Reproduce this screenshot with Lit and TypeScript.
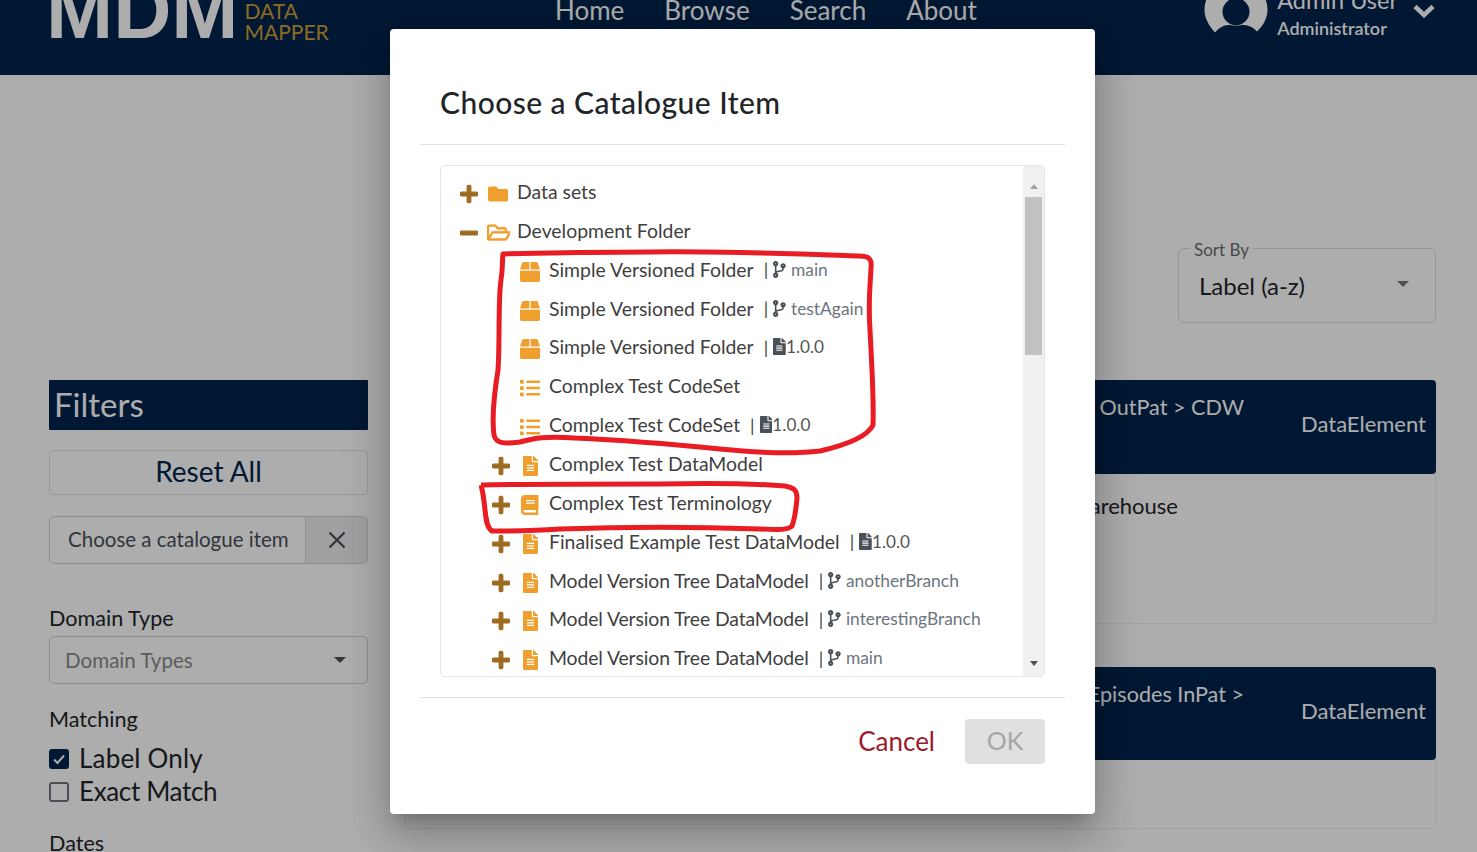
import { LitElement, html, css, svg } from 'lit';
import { customElement } from 'lit/decorators.js';

const icons: Record<string, [number, string]> = {
  plus: [448, 'M416 208H272V64c0-17.67-14.33-32-32-32h-32c-17.67 0-32 14.33-32 32v144H32c-17.67 0-32 14.33-32 32v32c0 17.67 14.33 32 32 32h144v144c0 17.67 14.33 32 32 32h32c17.67 0 32-14.33 32-32V304h144c17.67 0 32-14.33 32-32v-32c0-17.67-14.33-32-32-32z'],
  minus: [448, 'M416 208H32c-17.67 0-32 14.33-32 32v32c0 17.67 14.33 32 32 32h384c17.67 0 32-14.33 32-32v-32c0-17.67-14.33-32-32-32z'],
  folder: [512, 'M464 128H272l-64-64H48C21.49 64 0 85.49 0 112v288c0 26.51 21.49 48 48 48h416c26.51 0 48-21.49 48-48V176c0-26.51-21.49-48-48-48z'],
  open: [576, 'M527.9 224H480v-48c0-26.5-21.5-48-48-48H272l-64-64H48C21.5 64 0 85.5 0 112v288c0 26.5 21.5 48 48 48h400c16.5 0 31.9-8.5 40.7-22.6l79.9-128c20-31.9-3-73.4-40.7-73.4zM48 118c0-3.3 2.7-6 6-6h134.1l64 64H426c3.3 0 6 2.7 6 6v42H152c-16.8 0-32.4 8.8-41.1 23.2L48 351.4zm400 282H72l77.2-128H528z'],
  box: [512, 'M509.5 184.6L458.9 32.8C452.4 13.2 434.1 0 413.4 0H272v192h238.7c-.4-2.5-.4-5-1.2-7.4zM240 0H98.6c-20.7 0-39 13.2-45.5 32.8L2.5 184.6c-.8 2.4-.8 4.9-1.2 7.4H240V0zM0 224v240c0 26.5 21.5 48 48 48h416c26.5 0 48-21.5 48-48V224H0z'],
  list: [512, 'M80 368H16a16 16 0 0 0-16 16v64a16 16 0 0 0 16 16h64a16 16 0 0 0 16-16v-64a16 16 0 0 0-16-16zm0-320H16A16 16 0 0 0 0 64v64a16 16 0 0 0 16 16h64a16 16 0 0 0 16-16V64a16 16 0 0 0-16-16zm0 160H16a16 16 0 0 0-16 16v64a16 16 0 0 0 16 16h64a16 16 0 0 0 16-16v-64a16 16 0 0 0-16-16zm416 176H176a16 16 0 0 0-16 16v32a16 16 0 0 0 16 16h320a16 16 0 0 0 16-16v-32a16 16 0 0 0-16-16zm0-320H176a16 16 0 0 0-16 16v32a16 16 0 0 0 16 16h320a16 16 0 0 0 16-16V80a16 16 0 0 0-16-16zm0 160H176a16 16 0 0 0-16 16v32a16 16 0 0 0 16 16h320a16 16 0 0 0 16-16v-32a16 16 0 0 0-16-16z'],
  file: [384, 'M224 136V0H24C10.7 0 0 10.7 0 24v464c0 13.3 10.7 24 24 24h336c13.3 0 24-10.7 24-24V160H248c-13.2 0-24-10.8-24-24zm64 236c0 6.6-5.4 12-12 12H108c-6.6 0-12-5.4-12-12v-8c0-6.6 5.4-12 12-12h168c6.6 0 12 5.4 12 12v8zm0-64c0 6.6-5.4 12-12 12H108c-6.6 0-12-5.4-12-12v-8c0-6.6 5.4-12 12-12h168c6.6 0 12 5.4 12 12v8zm0-72v8c0 6.6-5.4 12-12 12H108c-6.6 0-12-5.4-12-12v-8c0-6.6 5.4-12 12-12h168c6.6 0 12 5.4 12 12zm96-114.1v6.1H256V0h6.1c6.4 0 12.5 2.5 17 7l97.9 98c4.5 4.5 7 10.6 7 16.9z'],
  book: [448, 'M448 360V24c0-13.3-10.7-24-24-24H96C43 0 0 43 0 96v320c0 53 43 96 96 96h328c13.3 0 24-10.7 24-24v-16c0-7.5-3.5-14.3-8.9-18.7-4.2-15.4-4.2-59.3 0-74.7 5.4-4.3 8.9-11.1 8.9-18.6zM128 134c0-3.3 2.7-6 6-6h212c3.3 0 6 2.7 6 6v20c0 3.3-2.7 6-6 6H134c-3.3 0-6-2.7-6-6v-20zm0 64c0-3.3 2.7-6 6-6h212c3.3 0 6 2.7 6 6v20c0 3.3-2.7 6-6 6H134c-3.3 0-6-2.7-6-6v-20zm253.4 250H96c-17.7 0-32-14.3-32-32 0-17.6 14.4-32 32-32h285.4c-1.9 17.1-1.9 46.9 0 64z'],
  branch: [384, 'M384 144c0-44.2-35.8-80-80-80s-80 35.8-80 80c0 36.4 24.3 67.1 57.5 76.8-.6 16.1-4.2 28.5-11 36.9-15.4 19.2-49.3 22.4-85.2 25.7-28.2 2.6-57.4 5.4-81.3 16.9v-144c32.5-10.2 56-40.5 56-76.3 0-44.2-35.8-80-80-80S0 35.8 0 80c0 35.8 23.5 66.1 56 76.3v199.3C23.5 365.9 0 396.2 0 432c0 44.2 35.8 80 80 80s80-35.8 80-80c0-34-21.2-63.1-51.2-74.6 3.1-5.2 7.8-9.8 14.9-13.4 16.2-8.2 40.4-10.4 66.1-12.8 42.2-3.9 90-8.4 118.2-43.4 14-17.4 21.1-39.8 21.6-67.9 31.6-10.8 54.4-40.7 54.4-75.9zM80 64c8.8 0 16 7.2 16 16s-7.2 16-16 16-16-7.2-16-16 7.2-16 16-16zm0 384c-8.8 0-16-7.2-16-16s7.2-16 16-16 16 7.2 16 16-7.2 16-16 16zm224-320c8.8 0 16 7.2 16 16s-7.2 16-16 16-16-7.2-16-16 7.2-16 16-16z'],
};

const icon = (name: string, cls: string) => {
  const [w, d] = icons[name];
  return html`<svg class=${cls} viewBox="0 0 ${w} 512"><path d=${d}></path></svg>`;
};

interface Row { level: number; toggle?: string; icon: string; label: string; branch?: string; version?: string; }

const rows: Row[] = [
  { level: 0, toggle: 'plus', icon: 'folder', label: 'Data sets' },
  { level: 0, toggle: 'minus', icon: 'open', label: 'Development Folder' },
  { level: 1, icon: 'box', label: 'Simple Versioned Folder', branch: 'main' },
  { level: 1, icon: 'box', label: 'Simple Versioned Folder', branch: 'testAgain' },
  { level: 1, icon: 'box', label: 'Simple Versioned Folder', version: '1.0.0' },
  { level: 1, icon: 'list', label: 'Complex Test CodeSet' },
  { level: 1, icon: 'list', label: 'Complex Test CodeSet', version: '1.0.0' },
  { level: 1, toggle: 'plus', icon: 'file', label: 'Complex Test DataModel' },
  { level: 1, toggle: 'plus', icon: 'book', label: 'Complex Test Terminology' },
  { level: 1, toggle: 'plus', icon: 'file', label: 'Finalised Example Test DataModel', version: '1.0.0' },
  { level: 1, toggle: 'plus', icon: 'file', label: 'Model Version Tree DataModel', branch: 'anotherBranch' },
  { level: 1, toggle: 'plus', icon: 'file', label: 'Model Version Tree DataModel', branch: 'interestingBranch' },
  { level: 1, toggle: 'plus', icon: 'file', label: 'Model Version Tree DataModel', branch: 'main' },
];

@customElement('app-root')
export class AppRoot extends LitElement {
  static styles = css`
    :host {
      display: block;
      position: relative;
      height: 852px;
      overflow: hidden;
      background: #fff;
      font-family: 'Lato', 'Open Sans', sans-serif;
      color: #212529;
    }
    * { box-sizing: border-box; }

    header {
      height: 75px;
      background: #01244c;
      color: #fff;
      display: flex;
      align-items: flex-end;
      overflow: hidden;
      padding: 0 42px 36px 46px;
    }
    .logo { display: flex; align-items: flex-end; width: 509px; }
    .mdm {
      font: bold 80.6px/60px 'Liberation Sans', sans-serif;
      height: 60px;
      margin-bottom: -1px;
    }
    .sub {
      color: #cc9f35;
      font-size: 21px;
      line-height: 21px;
      margin: 0 0 -3px 6px;
      width: 90px;
    }
    nav { display: flex; gap: 40px; font-size: 26px; line-height: 30px; margin-bottom: 14px; }
    .user { margin-left: auto; display: flex; align-items: flex-end; }
    .avatar { width: 64px; height: 40px; fill: #fff; display: block; margin: 0 9px 1px 0; }
    .who { font-size: 18px; font-weight: 600; line-height: 24px; margin-bottom: -1px; }
    .who .name-top { font-size: 23.500px; font-weight: 400; line-height: 27px; margin-bottom: 2px; }
    .chev { width: 22px; height: 14px; margin: 0 0 21px 15px; fill: none; stroke: #fff; stroke-width: 4.500; }

    main {
      display: grid;
      grid-template-columns: 319px 1fr;
      column-gap: 37px;
      padding: 0 41px 0 49px;
    }
    .sort-row { grid-column: 1 / 3; display: flex; justify-content: flex-end; padding-top: 164px; height: 305px; }
    fieldset {
      width: 258px;
      height: 84px;
      margin: 0;
      border: 1px solid #dcdcdc;
      border-radius: 6px;
      padding: 0 20px;
      display: flex;
      justify-content: space-between;
    }
    legend { font-size: 17px; height: 18px; line-height: 22px; color: #6c6c6c; padding: 0 4px 0 4px; margin-left: -9px; }
    .sort-val { font-size: 24px; line-height: 30px; margin-top: 14px; }
    .caret { width: 0; height: 0; border: 6.500px solid transparent; border-top-color: #757575; border-bottom: 0; margin: 24px 6px 0 0; }

    .filters { display: flex; flex-direction: column; }
    .bar { background: #01244c; color: #fff; height: 50px; font-size: 33px; line-height: 48px; padding-left: 5px; border-radius: 1px; }
    .reset {
      margin-top: 20px;
      height: 45px;
      border: 1px solid #dee2e6;
      border-radius: 4px;
      text-align: center;
      font-size: 28px;
      line-height: 40px;
      color: #01244c;
    }
    .choose {
      margin-top: 21px;
      height: 48px;
      display: flex;
      border: 1px solid #ced4da;
      border-radius: 5px;
      overflow: hidden;
    }
    .choose span { width: 255px; padding-left: 18px; font-size: 20.500px; line-height: 44px; color: #495057; }
    .clear { flex: 1; background: #e9ecef; border-left: 1px solid #ced4da; display: flex; align-items: center; justify-content: center; }
    .clear svg { width: 18px; height: 18px; stroke: #495057; stroke-width: 2.200; fill: none; }
    .lbl { font-size: 21.600px; line-height: 26px; }
    .domain { margin-top: 41px; }
    .select {
      margin-top: 5px;
      height: 48px;
      border: 1px solid #ced4da;
      border-radius: 5px;
      padding: 0 21px 0 15px;
      display: flex;
      justify-content: space-between;
      align-items: center;
      font-size: 20.600px;
      color: #8a8a8a;
    }
    .select i { width: 0; height: 0; border: 6px solid transparent; border-top-color: #495057; border-bottom: 0; }
    .match { margin-top: 22px; }
    .check { display: flex; align-items: center; gap: 10px; font-size: 26px; line-height: 33px; }
    .label-only { margin-top: 10px; letter-spacing: 0.200px; }
    .exact { letter-spacing: -0.350px; }
    .box { width: 20px; height: 20px; border: 2px solid #6c757d; border-radius: 3px; }
    .box.on { background: #01244c; border-color: #01244c; }
    .box svg { display: block; width: 16px; height: 16px; fill: none; stroke: #fff; stroke-width: 2; }
    .dates { margin-top: 22px; }

    .cards { display: flex; flex-direction: column; }
    .card { border: 1px solid #eceef0; border-top: 0; border-radius: 4px; }
    .card + .card { margin-top: 43px; }
    .card-head {
      background: #01244c;
      color: #fff;
      display: flex;
      border-radius: 4px;
      margin: 0 -1px;
      padding: 13px 10px 0 0;
      font-size: 22px;
      line-height: 28px;
    }
    .card-head .title { width: 839px; text-align: right; white-space: nowrap; font-size: 21.600px; }
    .card-head .type { margin: 17px 0 0 auto; }
    .card-body { font-size: 22px; height: 149px; padding: 18px 0 0; width: 772px; text-align: right; }
    .h94 { height: 94px; }
    .h93 { height: 93px; }
    .b68 { height: 68px; }

    .shade {
      position: absolute;
      inset: 0;
      background: rgba(0, 0, 0, 0.32);
      padding: 29px 0 0 390px;
    }
    .dialog {
      position: relative;
      width: 705px;
      height: 785px;
      background: #fff;
      border-radius: 4px;
      padding: 0 30px;
      box-shadow: 0 11px 15px -7px rgba(0,0,0,.2), 0 24px 38px 3px rgba(0,0,0,.14), 0 9px 46px 8px rgba(0,0,0,.12);
    }
    h2 {
      margin: 0;
      height: 116px;
      border-bottom: 1px solid #e0e0e0;
      padding: 53px 0 0 20px;
      font-size: 30px;
      letter-spacing: 0.450px;
      line-height: 40px;
      font-weight: 500;
    }
    .panel-wrap { padding: 20px; border-bottom: 1px solid #e0e0e0; }
    .panel {
      position: relative;
      height: 512px;
      border: 1px solid #e4e4e4;
      border-radius: 5px;
      overflow: hidden;
      padding-top: 7px;
      display: flex;
    }
    .tree { flex: 1; }
    .row { display: flex; align-items: center; height: 38.860px; font-size: 19.400px; color: #3f3f3f; white-space: nowrap; }
    .tog { width: 18px; height: 20px; fill: #9c6b1f; stroke: #9c6b1f; stroke-width: 28; flex: none; margin-top: 3px; }
    .tog-gap { width: 18px; flex: none; }
    .ico { height: 20px; fill: #ee9f2d; flex: none; margin-top: 3px; }
    .ico.open { height: 21px; stroke: #ee9f2d; stroke-width: 12; margin: 3px 0 0 1px; }
    .icon-cell { width: 39px; flex: none; display: flex; justify-content: center; padding-left: 1px; }
    .name { margin-top: -2px; }
    .name.tight { letter-spacing: -0.120px; }
    .sep { margin-left: 10px; font-size: 18px; margin-top: -2px; }
    .meta { height: 17px; fill: #495057; margin-left: 5px; flex: none; margin-top: -2px; }
    .branch { color: #6c757d; font-size: 17.400px; margin-left: 5px; margin-top: -2px; }
    .ver { color: #555; font-size: 17.200px; margin-top: -2px; }
    .scroll { width: 21px; background: #f1f1f1; position: relative; display: flex; flex-direction: column; align-items: center; padding-top: 17px; margin-top: -7px; height: 510px; }
    .scroll b { display: block; width: 17px; height: 158px; background: #c1c1c1; margin-top: 14px; }
    .up, .down { position: absolute; width: 0; height: 0; border: 4px solid transparent; }
    .up { top: 18px; border-top: 0; border-bottom: 5px solid #a3a3a3; }
    .down { bottom: 10px; border-bottom: 0; border-top: 5px solid #505050; }
    .actions { display: flex; justify-content: flex-end; align-items: center; gap: 30px; padding: 21px 20px 0 0; }
    .cancel { font-size: 26px; color: #9b1c2a; margin-bottom: 2px; }
    .ok { width: 80px; height: 45px; background: #e0e0e0; color: #a6a6a6; font-size: 25px; line-height: 43px; text-align: center; border-radius: 4px; }

    .ink { position: absolute; left: -390px; top: -29px; width: 1477px; height: 852px; fill: none; stroke: #e81c22; stroke-width: 5; stroke-linejoin: round; pointer-events: none; }
  `;

  renderRow(r: Row) {
    const pad = r.level === 0 ? 19 : 51;
    return html`<div class="row" style="padding-left:${pad}px">
      ${r.toggle ? icon(r.toggle, 'tog') : html`<span class="tog-gap"></span>`}
      <span class="icon-cell">${icon(r.icon, r.icon === 'open' ? 'ico open' : 'ico')}</span>
      <span class="name ${r.label.startsWith('Model') ? 'tight' : ''}">${r.label}</span>
      ${r.branch || r.version ? html`<span class="sep">|</span>` : ''}
      ${r.branch ? html`${icon('branch', 'meta')}<span class="branch">${r.branch}</span>` : ''}
      ${r.version ? html`${icon('file', 'meta')}<span class="ver">${r.version}</span>` : ''}
    </div>`;
  }

  render() {
    return html`
      <header>
        <div class="logo">
          <div class="mdm">MDM</div>
          <div class="sub">DATA MAPPER</div>
        </div>
        <nav><span>Home</span><span>Browse</span><span>Search</span><span>About</span></nav>
        <div class="user">
          <svg class="avatar" viewBox="0 0 64 40">
            <path fill-rule="evenodd" d="M11 34.500 C5 28 .5 20 .5 12 C.5 -5 14.500 -19 32 -19 C49.500 -19 63.500 -5 63.500 12 C63.500 20 59 28 53 33.500 C49 29 44 26.500 38 27 C34 28 30 28 26 27 C20 26.500 15 30 11 34.500 Z M32 .2 A13.500 13.500 0 1 0 32 27.200 A13.500 13.500 0 1 0 32 .2 Z"></path>
          </svg>
          <div class="who"><div class="name-top">Admin User</div><div>Administrator</div></div>
          <svg class="chev" viewBox="0 0 22 14"><path d="M2 2.500 L11 11 L20 2.500"></path></svg>
        </div>
      </header>
      <main>
        <div class="sort-row">
          <fieldset>
            <legend>Sort By</legend>
            <span class="sort-val">Label (a-z)</span>
            <i class="caret"></i>
          </fieldset>
        </div>
        <section class="filters">
          <div class="bar">Filters</div>
          <div class="reset">Reset All</div>
          <div class="choose">
            <span>Choose a catalogue item</span>
            <div class="clear"><svg viewBox="0 0 18 18"><path d="M1.500 1.500 L16.500 16.500 M16.500 1.500 L1.500 16.500"></path></svg></div>
          </div>
          <div class="lbl domain">Domain Type</div>
          <div class="select"><span>Domain Types</span><i></i></div>
          <div class="lbl match">Matching</div>
          <div class="check label-only"><span class="box on"><svg viewBox="0 0 16 16"><path d="M3 8.500 L6.500 12 L13 4.500"></path></svg></span>Label Only</div>
          <div class="check exact"><span class="box"></span>Exact Match</div>
          <div class="lbl dates">Dates</div>
        </section>
        <section class="cards">
          <article class="card">
            <div class="card-head h94"><span class="title">OutPat &gt; CDW</span><span class="type">DataElement</span></div>
            <div class="card-body">Data Warehouse</div>
          </article>
          <article class="card">
            <div class="card-head h93"><span class="title">Episodes InPat &gt;</span><span class="type">DataElement</span></div>
            <div class="card-body b68"></div>
          </article>
        </section>
      </main>
      <div class="shade">
        <div class="dialog">
          <h2>Choose a Catalogue Item</h2>
          <div class="panel-wrap">
            <div class="panel">
              <div class="tree">${rows.map((r) => this.renderRow(r))}</div>
              <div class="scroll"><i class="up"></i><b></b><i class="down"></i></div>
            </div>
          </div>
          <div class="actions"><span class="cancel">Cancel</span><span class="ok">OK</span></div>
          <svg class="ink" viewBox="0 0 1477 852">
            ${svg`<path d="M503 254 C540 253 600 252 650 252 C720 251 800 254 860 256 C870 256 872 260 871 268 C870 290 868 300 870 330 C872 370 874 400 873 425 C868 436 850 444 820 451 C795 454 760 453 720 449 C680 445 620 440 575 438 C545 436 535 438 520 442 C505 444 496 444 494 435 C492 420 494 395 498 370 C500 340 498 300 501 280 C503 268 502 262 503 254 Z"></path>
            <path d="M481 485 C520 484 600 484 660 484 C710 483 760 484 785 486 C795 488 797 491 797 498 C796 510 795 518 792 526 C788 530 780 530 760 529 C700 527 620 527 560 529 C530 531 505 531 492 531 C487 528 486 520 485 510 C484 500 483 492 481 485"></path>`}
          </svg>
        </div>
      </div>
    `;
  }
}
